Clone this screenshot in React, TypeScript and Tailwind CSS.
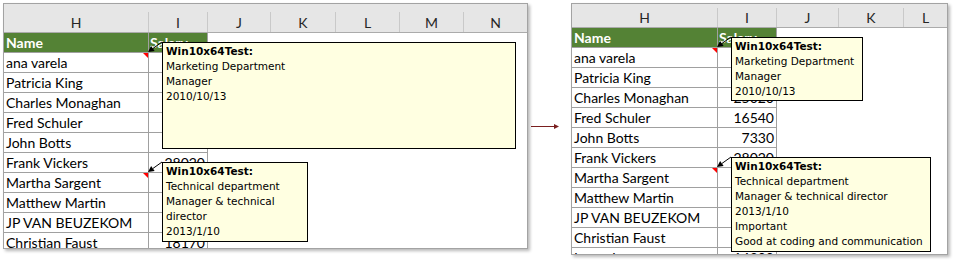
import React from "react";

type Row = [string, string];

const rows: Row[] = [
  ["ana varela", "21650"],
  ["Patricia King", "18900"],
  ["Charles Monaghan", "25020"],
  ["Fred Schuler", "16540"],
  ["John Botts", "7330"],
  ["Frank Vickers", "28020"],
  ["Martha Sargent", "12350"],
  ["Matthew Martin", "20480"],
  ["JP VAN BEUZEKOM", "9860"],
  ["Christian Faust", "18170"],
  ["Lucas Leman", "14300"],
];

const commented = new Set(["ana varela", "Martha Sargent"]);

function RedMark() {
  return (
    <svg className="absolute top-0 right-0" width="5" height="5" viewBox="0 0 5 5">
      <polygon points="0,0 5,0 5,5" fill="#ff0000" />
    </svg>
  );
}

function Arrow({ x1, y1, x2, y2 }: { x1: number; y1: number; x2: number; y2: number }) {
  // from (x1,y1) tail to (x2,y2) tip
  const dx = x2 - x1;
  const dy = y2 - y1;
  const len = Math.hypot(dx, dy);
  const ux = dx / len;
  const uy = dy / len;
  const L = 6;
  const W = 3;
  const bx = x2 - ux * L;
  const by = y2 - uy * L;
  const p1 = `${x2},${y2}`;
  const p2 = `${bx - uy * W},${by + ux * W}`;
  const p3 = `${bx + uy * W},${by - ux * W}`;
  return (
    <g>
      <line x1={x1} y1={y1} x2={bx} y2={by} stroke="#000" strokeWidth="1" />
      <polygon points={`${p1} ${p2} ${p3}`} fill="#000" />
    </g>
  );
}

function Comment({
  className,
  lines,
}: {
  className: string;
  lines: string[];
}) {
  return (
    <div
      className={`absolute z-10 bg-[#ffffe1] border border-black px-[3px] pt-[1px] text-[10.5px] leading-[15px] text-black font-['DejaVu_Sans',sans-serif] ${className}`}
    >
      <div className="font-bold">Win10x64Test:</div>
      {lines.map((l, i) => (
        <div key={i}>{l}</div>
      ))}
    </div>
  );
}

type SheetProps = {
  panelClass: string;
  headerClass: string;
  headCellClass: string;
  cols: { label: string; cls: string }[];
  hCls: string;
  iCls: string;
  children?: React.ReactNode;
  arrows: { x1: number; y1: number; x2: number; y2: number }[];
};

function Sheet({ panelClass, headerClass, headCellClass, cols, hCls, iCls, children, arrows }: SheetProps) {
  return (
    <div
      className={`relative shrink-0 overflow-hidden bg-white border border-[#a3a3a3] shadow-[2px_2px_3px_rgba(0,0,0,0.28)] font-[Lato,sans-serif] text-[14px] text-black ${panelClass}`}
    >
      <div className={`flex items-end bg-[#e6e6e6] border-b border-[#ababab] ${headerClass}`}>
        {cols.map((c, i) => (
          <div
            key={c.label}
            className={`${c.cls} ${headCellClass} shrink-0 flex items-center justify-center text-[#262626] ${
              i < cols.length - 1 ? "border-r border-[#c9c9c9]" : ""
            }`}
          >
            {c.label}
          </div>
        ))}
      </div>
      <div className="flex flex-col">
        <div className="flex h-[20px]">
          <div className={`${hCls} shrink-0 h-[20px] border-r border-b border-[#a0a0a0] bg-[#548235] text-white font-bold pl-[2px] leading-[19px]`}>
            Name
          </div>
          <div className={`${iCls} shrink-0 h-[20px] border-r border-b border-[#a0a0a0] bg-[#548235] text-white font-bold pl-[1px] leading-[19px]`}>
            Salary
          </div>
        </div>
        {rows.map(([n, v]) => (
          <div key={n} className="flex h-[20px]">
            <div className={`${hCls} relative shrink-0 h-[20px] border-r border-b border-[#a0a0a0] pl-[2px] leading-[19px] whitespace-nowrap`}>
              {n}
              {commented.has(n) && <RedMark />}
            </div>
            <div className={`${iCls} shrink-0 h-[20px] border-r border-b border-[#a0a0a0] pr-[2px] text-right leading-[19px]`}>
              {v}
            </div>
          </div>
        ))}
      </div>
      {children}
      <svg className="absolute inset-0 z-20 pointer-events-none" width="100%" height="100%">
        {arrows.map((a, i) => (
          <Arrow key={i} {...a} />
        ))}
      </svg>
    </div>
  );
}

export default function App() {
  return (
    <div className="w-[954px] h-[260px] bg-white flex items-start pt-[3px] pl-[3px]">
      <Sheet
        panelClass="w-[525px] h-[246px]"
        headerClass="h-[29px]"
        headCellClass="h-[20px]"
        cols={[
          { label: "H", cls: "w-[145px]" },
          { label: "I", cls: "w-[59px]" },
          { label: "J", cls: "w-[63px]" },
          { label: "K", cls: "w-[65px]" },
          { label: "L", cls: "w-[64px]" },
          { label: "M", cls: "w-[64px]" },
          { label: "N", cls: "w-[63px]" },
        ]}
        hCls="w-[145px]"
        iCls="w-[59px]"
        arrows={[
          { x1: 158, y1: 38, x2: 144, y2: 48 },
          { x1: 158, y1: 158, x2: 144, y2: 168 },
        ]}
      >
        <Comment
          className="left-[158px] top-[38px] w-[354px] h-[107px]"
          lines={["Marketing Department", "Manager", "2010/10/13"]}
        />
        <Comment
          className="left-[158px] top-[158px] w-[146px] h-[80px]"
          lines={["Technical department", "Manager & technical director", "2013/1/10"]}
        />
      </Sheet>

      <div className="w-[43px] shrink-0">
        <svg width="43" height="246" viewBox="0 0 43 246">
          <line x1="3" y1="123.5" x2="28" y2="123.5" stroke="#7a1f1f" strokeWidth="1" />
          <polygon points="26,121 31,123.5 26,126" fill="#7a1f1f" />
        </svg>
      </div>

      <Sheet
        panelClass="w-[377px] h-[252px]"
        headerClass="h-[24px]"
        headCellClass="h-[19px]"
        cols={[
          { label: "H", cls: "w-[146px]" },
          { label: "I", cls: "w-[59px]" },
          { label: "J", cls: "w-[62px]" },
          { label: "K", cls: "w-[65px]" },
          { label: "L", cls: "w-[43px]" },
        ]}
        hCls="w-[146px]"
        iCls="w-[59px]"
        arrows={[
          { x1: 159, y1: 33, x2: 145, y2: 43 },
          { x1: 159, y1: 153, x2: 145, y2: 163 },
        ]}
      >
        <Comment
          className="left-[159px] top-[33px] w-[132px] h-[64px]"
          lines={["Marketing Department", "Manager", "2010/10/13"]}
        />
        <Comment
          className="left-[159px] top-[153px] w-[200px] h-[95px]"
          lines={[
            "Technical department",
            "Manager & technical director",
            "2013/1/10",
            "Important",
            "Good at coding and communication",
          ]}
        />
      </Sheet>
    </div>
  );
}
